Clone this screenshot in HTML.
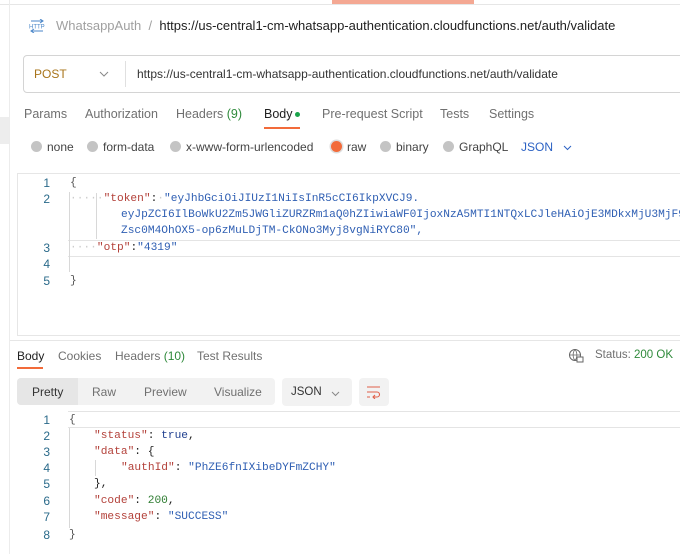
<!DOCTYPE html>
<html><head><meta charset="utf-8"><style>
*{margin:0;padding:0;box-sizing:border-box}
body{width:680px;height:554px;background:#fff;font-family:"Liberation Sans",sans-serif;position:relative;overflow:hidden;color:#212121}
.a{position:absolute;white-space:nowrap}
.mono{font-family:"Liberation Mono",monospace;font-size:11.2px}
.k{color:#b3413a}.s{color:#2f5fb3}.n{color:#2f7d32}.b{color:#1f3f8f}
.ln{color:#2a6a8a;text-align:right;width:20px;font-family:"Liberation Sans",sans-serif;font-size:12px}
.rad{display:inline-block;width:11px;height:11px;border-radius:50%;background:#c4c4c4;vertical-align:-1px;margin-right:5px}
</style></head><body>
<div class="a" style="left:0;top:0;width:680px;height:5px;border-bottom:1px solid #e6e6e6"></div>
<div class="a" style="left:332px;top:0;width:142px;height:4px;background:#f4a893"></div>
<div class="a" style="left:9px;top:0;width:1px;height:554px;background:#ececec"></div>
<div class="a" style="left:0;top:117px;width:9px;height:27px;background:#ededed"></div>

<svg class="a" style="left:28px;top:19px" width="18" height="14" viewBox="0 0 18 14"><path d="M3 2h12M12 0l3 2-3 2M15 12H3M6 10l-3 2 3 2" stroke="#4a86c8" stroke-width="1" fill="none"/><text x="1" y="9.5" font-size="6" fill="#4a86c8" font-family="Liberation Sans">HTTP</text></svg>
<div class="a" style="left:56px;top:18px;font-size:13px;color:#a0a0a0">WhatsappAuth&nbsp;&nbsp;/&nbsp;&nbsp;<span style="color:#212121">https://us-central1-cm-whatsapp-authentication.cloudfunctions.net/auth/validate</span></div>

<div class="a" style="left:23px;top:55px;width:670px;height:38px;border:1px solid #d4d4d4;border-radius:4px"></div>
<div class="a" style="left:34px;top:67px;font-size:12px;color:#a8741a">POST</div>
<svg class="a" style="left:99px;top:71px" width="10" height="6"><path d="M1 1l4 4 4-4" stroke="#888" fill="none"/></svg>
<div class="a" style="left:125px;top:61px;width:1px;height:26px;background:#e0e0e0"></div>
<div class="a" style="left:137px;top:67px;font-size:12px;color:#333">https://us-central1-cm-whatsapp-authentication.cloudfunctions.net/auth/validate</div>

<div class="a" style="left:24px;top:107px;font-size:12.5px;color:#707070">Params</div>
<div class="a" style="left:85px;top:107px;font-size:12.5px;color:#707070">Authorization</div>
<div class="a" style="left:176px;top:107px;font-size:12.5px;color:#707070">Headers <span style="color:#2f8a3b">(9)</span></div>
<div class="a" style="left:264px;top:107px;font-size:12.5px;color:#212121">Body</div>
<div class="a" style="left:295px;top:112px;width:5px;height:5px;border-radius:50%;background:#1aa34a"></div>
<div class="a" style="left:264px;top:127px;width:36px;height:2px;background:#f26b3a"></div>
<div class="a" style="left:322px;top:107px;font-size:12.5px;color:#707070">Pre-request Script</div>
<div class="a" style="left:440px;top:107px;font-size:12.5px;color:#707070">Tests</div>
<div class="a" style="left:489px;top:107px;font-size:12.5px;color:#707070">Settings</div>

<div class="a" style="left:31px;top:140px;font-size:12px;color:#444"><span class="rad"></span>none</div>
<div class="a" style="left:87px;top:140px;font-size:12px;color:#444"><span class="rad"></span>form-data</div>
<div class="a" style="left:170px;top:140px;font-size:12px;color:#444"><span class="rad"></span>x-www-form-urlencoded</div>
<div class="a" style="left:331px;top:140px;font-size:12px;color:#444"><span class="rad" style="background:#f26b3a;box-shadow:0 0 0 1.5px #ddd"></span>raw</div>
<div class="a" style="left:380px;top:140px;font-size:12px;color:#444"><span class="rad"></span>binary</div>
<div class="a" style="left:443px;top:140px;font-size:12px;color:#444"><span class="rad"></span>GraphQL</div>
<div class="a" style="left:521px;top:140px;font-size:12px;color:#2c62c4">JSON</div>
<svg class="a" style="left:563px;top:145px" width="9" height="6"><path d="M1 1l3.5 3.5L8 1" stroke="#2c62c4" fill="none"/></svg>

<div class="a" style="left:17px;top:173px;width:670px;height:163px;border:1px solid #e6e6e6;border-right:none"></div>
<div class="a" style="left:68px;top:240px;width:620px;height:17px;border-top:1px solid #e4e4e4;border-bottom:1px solid #e4e4e4"></div>
<div class="a" style="left:69px;top:192px;width:1px;height:80px;background:#d8d8d8"></div>
<div class="a" style="left:96px;top:193px;width:1px;height:46px;background:#d8d8d8"></div>
<div class="a ln" style="left:30px;top:176px">1</div>
<div class="a ln" style="left:30px;top:192px">2</div>
<div class="a ln" style="left:30px;top:241px">3</div>
<div class="a ln" style="left:30px;top:257px">4</div>
<div class="a ln" style="left:30px;top:274px">5</div>
<div class="a mono" style="left:70px;top:177px;color:#555">{</div>
<div class="a mono" style="left:70px;top:193px"><span style="color:#ccc">·····</span><span class="k">"token"</span>:<span style="color:#ccc">·</span><span class="s">"eyJhbGciOiJIUzI1NiIsInR5cCI6IkpXVCJ9.</span></div>
<div class="a mono s" style="left:121px;top:209px">eyJpZCI6IlBoWkU2Zm5JWGliZURZRm1aQ0hZIiwiaWF0IjoxNzA5MTI1NTQxLCJleHAiOjE3MDkxMjU3MjF9.</div>
<div class="a mono s" style="left:121px;top:225px">Zsc0M4OhOX5-op6zMuLDjTM-CkONo3Myj8vgNiRYC80",</div>
<div class="a mono" style="left:70px;top:242px"><span style="color:#ccc">····</span><span class="k">"otp"</span>:<span class="s">"4319"</span></div>
<div class="a mono" style="left:70px;top:275px;color:#555">}</div>

<div class="a" style="left:10px;top:340px;width:670px;height:1px;background:#e6e6e6"></div>
<div class="a" style="left:17px;top:349px;font-size:12px;color:#212121">Body</div>
<div class="a" style="left:17px;top:367px;width:26px;height:2px;background:#f26b3a"></div>
<div class="a" style="left:58px;top:349px;font-size:12px;color:#707070">Cookies</div>
<div class="a" style="left:115px;top:349px;font-size:12px;color:#707070">Headers <span style="color:#2f8a3b">(10)</span></div>
<div class="a" style="left:197px;top:349px;font-size:12px;color:#707070">Test Results</div>
<svg class="a" style="left:568px;top:348px" width="16" height="15" viewBox="0 0 16 15"><circle cx="7" cy="7" r="5.5" stroke="#666" fill="none"/><path d="M1.5 7h11M7 1.5c-2.5 3-2.5 8 0 11M7 1.5c2.5 3 2.5 8 0 11" stroke="#666" fill="none" stroke-width=".8"/><rect x="9" y="9" width="6" height="5" fill="#fff" stroke="#666"/></svg>
<div class="a" style="left:595px;top:349px;font-size:11.5px;color:#707070">Status: <span style="color:#2f8a3b">200 OK</span></div>

<div class="a" style="left:17px;top:378px;width:258px;height:27px;background:#f2f2f2;border-radius:4px"></div>
<div class="a" style="left:17px;top:378px;width:61px;height:27px;background:#e6e6e6;border-radius:4px 0 0 4px"></div>
<div class="a" style="left:32px;top:385px;font-size:12px;color:#333">Pretty</div>
<div class="a" style="left:92px;top:385px;font-size:12px;color:#707070">Raw</div>
<div class="a" style="left:144px;top:385px;font-size:12px;color:#707070">Preview</div>
<div class="a" style="left:214px;top:385px;font-size:12px;color:#707070">Visualize</div>
<div class="a" style="left:282px;top:378px;width:70px;height:28px;background:#f2f2f2;border-radius:4px"></div>
<div class="a" style="left:291px;top:386px;font-size:11.5px;color:#333">JSON</div>
<svg class="a" style="left:331px;top:391px" width="9" height="6"><path d="M1 1l3.5 3.5L8 1" stroke="#888" fill="none"/></svg>
<div class="a" style="left:359px;top:378px;width:30px;height:28px;background:#f2f2f2;border-radius:4px"></div>
<svg class="a" style="left:366px;top:385px" width="16" height="14" viewBox="0 0 16 14"><path d="M1 2h13M1 7h10a2.5 2.5 0 0 1 0 5H7M9 10l-2 2 2 2M1 12h3" stroke="#e0604a" fill="none" stroke-width="1.1"/></svg>

<div class="a" style="left:68px;top:411px;width:620px;height:17px;border-top:1px solid #e4e4e4;border-bottom:1px solid #e4e4e4"></div>
<div class="a" style="left:69px;top:428px;width:1px;height:100px;background:#d8d8d8"></div>
<div class="a" style="left:95px;top:460px;width:1px;height:16px;background:#d8d8d8"></div>
<div class="a ln" style="left:30px;top:413px">1</div>
<div class="a ln" style="left:30px;top:429px">2</div>
<div class="a ln" style="left:30px;top:445px">3</div>
<div class="a ln" style="left:30px;top:461px">4</div>
<div class="a ln" style="left:30px;top:477px">5</div>
<div class="a ln" style="left:30px;top:494px">6</div>
<div class="a ln" style="left:30px;top:510px">7</div>
<div class="a ln" style="left:30px;top:528px">8</div>
<div class="a mono" style="left:69px;top:414px;color:#555">{</div>
<div class="a mono" style="left:94px;top:430px"><span class="k">"status"</span>: <span class="b">true</span>,</div>
<div class="a mono" style="left:94px;top:446px"><span class="k">"data"</span>: {</div>
<div class="a mono" style="left:121px;top:462px"><span class="k">"authId"</span>: <span class="s">"PhZE6fnIXibeDYFmZCHY"</span></div>
<div class="a mono" style="left:94px;top:478px">},</div>
<div class="a mono" style="left:94px;top:495px"><span class="k">"code"</span>: <span class="n">200</span>,</div>
<div class="a mono" style="left:94px;top:511px"><span class="k">"message"</span>: <span class="s">"SUCCESS"</span></div>
<div class="a mono" style="left:69px;top:529px;color:#555">}</div>
</body></html>
